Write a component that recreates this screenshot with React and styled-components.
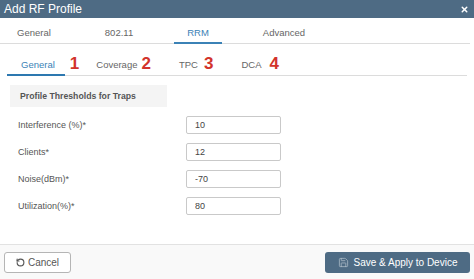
import React from "react";
import styled, { createGlobalStyle } from "styled-components";
import { RotateCcw, Save, X } from "lucide-react";

const GlobalStyle = createGlobalStyle`
    html, body {
        margin: 0;
        padding: 0;
        background: #ffffff;
    }
    body {
        font-family: "Liberation Sans", Arial, sans-serif;
        color: #555;
    }
`;

const Modal = styled.div`
    width: 474px;
    height: 279px;
    display: flex;
    flex-direction: column;
    background: #fff;
    overflow: hidden;
`;

const Header = styled.div`
    height: 18px;
    background: #4e6b84;
    display: flex;
    align-items: center;
    justify-content: space-between;
    padding: 0 5px 0 4px;
    color: #fff;
    font-size: 12px;
    flex-shrink: 0;
`;

const TopTabs = styled.div`
    display: flex;
    align-items: flex-end;
    gap: 28px;
    height: 26px;
    padding-left: 4px;
    margin-right: 4px;
    border-bottom: 1px solid #dcdcdc;
    box-sizing: border-box;
`;

const TopTab = styled.div`
    padding: 0 13px 4px;
    font-size: 9.5px;
    color: ${(p) => (p.$active ? "#3b82b6" : "#666")};
    border-bottom: 2px solid ${(p) => (p.$active ? "#3b82b6" : "transparent")};
    margin-bottom: -1px;
`;

const SubTabs = styled.div`
    display: flex;
    align-items: flex-end;
    height: 32px;
    margin: 0 7px 0 7px;
    border-bottom: 1px solid #dcdcdc;
    box-sizing: border-box;
`;

const SubItem = styled.div`
    display: flex;
    align-items: flex-end;
    margin-right: ${(p) => p.$gap}px;
`;

const SubTab = styled.div`
    padding: 0 ${(p) => p.$pr}px 4px 14px;
    font-size: 9.5px;
    color: ${(p) => (p.$active ? "#3b82b6" : "#666")};
    border-bottom: 2px solid ${(p) => (p.$active ? "#2d78b0" : "transparent")};
    margin-bottom: -1px;
`;

const Mark = styled.span`
    color: #d2332b;
    font-weight: 700;
    font-size: 17px;
    line-height: 1;
    padding-bottom: 3px;
    margin-left: ${(p) => p.$ml}px;
`;

const Body = styled.div`
    flex: 1;
    padding: 9px 0 0 10px;
`;

const SectionTitle = styled.div`
    width: 157px;
    height: 22px;
    background: #f4f4f4;
    display: flex;
    align-items: center;
    padding-left: 10px;
    box-sizing: border-box;
    font-size: 8.7px;
    font-weight: 700;
    color: #555;
    margin-bottom: 9px;
`;

const Rows = styled.div`
    display: flex;
    flex-direction: column;
    gap: 9px;
`;

const Row = styled.div`
    display: grid;
    grid-template-columns: 168px 95px;
    align-items: center;
    padding-left: 8px;
`;

const Label = styled.label`
    font-size: 9px;
    color: #555;
`;

const Input = styled.input`
    height: 18px;
    width: 95px;
    box-sizing: border-box;
    border: 1px solid #c9c9c9;
    border-radius: 2px;
    padding: 0 8px;
    font-family: "Liberation Sans", Arial, sans-serif;
    font-size: 9px;
    color: #444;
    outline: none;
`;

const Footer = styled.div`
    height: 34px;
    flex-shrink: 0;
    border-top: 1px solid #e2e2e2;
    background: #f9f9f9;
    display: flex;
    align-items: center;
    justify-content: space-between;
    padding: 0 4px;
`;

const CancelButton = styled.button`
    display: flex;
    align-items: center;
    justify-content: center;
    gap: 3px;
    width: 67px;
    height: 21px;
    background: #fff;
    border: 1px solid #b5b5b5;
    border-radius: 3px;
    font-family: "Liberation Sans", Arial, sans-serif;
    font-size: 10px;
    color: #555;
    padding: 0;
`;

const SaveButton = styled.button`
    display: flex;
    align-items: center;
    justify-content: center;
    gap: 5px;
    width: 145px;
    height: 21px;
    background: #4e6b84;
    border: none;
    border-radius: 3px;
    font-family: "Liberation Sans", Arial, sans-serif;
    font-size: 10px;
    color: #fff;
    padding: 0;
`;

const fields = [
    { label: "Interference (%)*", value: "10" },
    { label: "Clients*", value: "12" },
    { label: "Noise(dBm)*", value: "-70" },
    { label: "Utilization(%)*", value: "80" },
];

const subTabs = [
    { name: "General", mark: "1", pr: 10, ml: 5, gap: 3, active: true },
    { name: "Coverage", mark: "2", pr: 4, ml: 0, gap: 14 },
    { name: "TPC", mark: "3", pr: 6, ml: 0, gap: 14 },
    { name: "DCA", mark: "4", pr: 8, ml: 0, gap: 0 },
];

const App = () => {
    return (
        <>
            <GlobalStyle />
            <Modal>
                <Header>
                    <span>Add RF Profile</span>
                    <X size={9} strokeWidth={4} />
                </Header>
                <TopTabs>
                    <TopTab>General</TopTab>
                    <TopTab>802.11</TopTab>
                    <TopTab $active>RRM</TopTab>
                    <TopTab>Advanced</TopTab>
                </TopTabs>
                <SubTabs>
                    {subTabs.map((t) => (
                        <SubItem key={t.name} $gap={t.gap}>
                            <SubTab $active={t.active} $pr={t.pr}>
                                {t.name}
                            </SubTab>
                            <Mark $ml={t.ml}>{t.mark}</Mark>
                        </SubItem>
                    ))}
                </SubTabs>
                <Body>
                    <SectionTitle>Profile Thresholds for Traps</SectionTitle>
                    <Rows>
                        {fields.map((f) => (
                            <Row key={f.label}>
                                <Label>{f.label}</Label>
                                <Input defaultValue={f.value} />
                            </Row>
                        ))}
                    </Rows>
                </Body>
                <Footer>
                    <CancelButton>
                        <RotateCcw size={9} strokeWidth={3} />
                        Cancel
                    </CancelButton>
                    <SaveButton>
                        <Save size={11} strokeWidth={1.5} color="#b8c4cf" />
                        Save &amp; Apply to Device
                    </SaveButton>
                </Footer>
            </Modal>
        </>
    );
};

export default App;
